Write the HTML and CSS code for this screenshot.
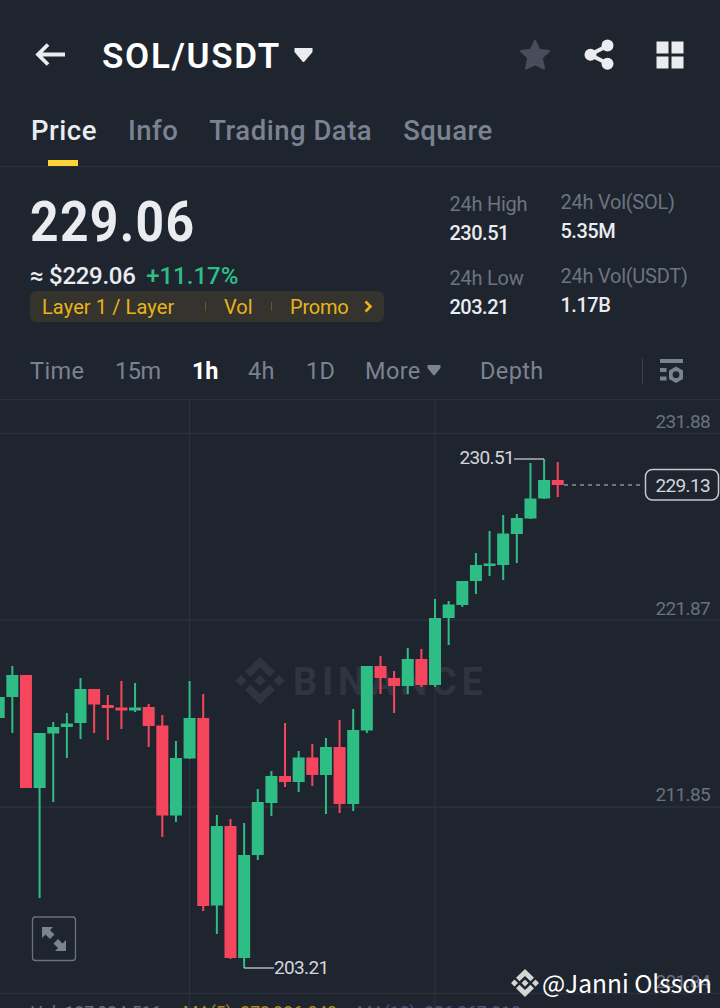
FILE: index.html
```html
<!DOCTYPE html>
<html lang="en">
<head>
    <meta charset="UTF-8" />
    <meta name="viewport" content="width=device-width, initial-scale=1.0"/>
    <title>SOL/USDT</title>
    <link rel="stylesheet" href="styles.css">
</head>
<body>
    <header class="header">
        <svg class="back" width="32" height="28" viewBox="0 0 32 28"><path d="M14 3.500L4 13.500l10 10M4.500 13.500H31"/></svg>
        <h1>SOL/USDT</h1>
        <svg class="caret" width="19" height="15" viewBox="0 0 19 15"><path d="M0.500 0h18v4L10.500 13.500q-1 1-2 0L0.500 4z"/></svg>
        <div class="actions">
            <svg width="32" height="32" viewBox="0 0 32 32"><path class="star" d="M16 2l4.200 8.800 9.800 1.200-7.200 6.700 2.200 10.800-9-4.200-9 4.200 2.200-10.800L2 12l9.800-1.200z"/></svg>
            <svg width="32" height="32" viewBox="0 0 32 32"><path class="share-line" d="M24 6.500L6 15.800l18 9"/><g class="light"><circle cx="6.500" cy="15.800" r="6"/><circle cx="23.500" cy="6.500" r="6"/><circle cx="23.500" cy="24.800" r="6"/></g></svg>
            <svg width="28" height="28" viewBox="0 0 28 28"><path class="light" d="M0.500 0.500h12v12h-12zM15.500 0.500h12v12h-12zM0.500 15.500h12v12h-12zM15.500 15.500h12v12h-12z"/></svg>
        </div>
    </header>

    <nav class="tabs">
        <span class="tab active">Price</span>
        <span class="tab">Info</span>
        <span class="tab">Trading Data</span>
        <span class="tab">Square</span>
    </nav>

    <section class="summary">
        <div class="quote">
            <div class="last-price">229.06</div>
            <div class="change">≈ $229.06 <span class="up">+11.17%</span></div>
            <div class="tags">
                <span class="tag-layer">Layer 1 / Layer</span>
                <i></i>
                <span class="tag-vol">Vol</span>
                <i></i>
                <span class="tag-promo">Promo</span>
                <svg width="9" height="13" viewBox="0 0 9 13"><path d="M1.500 1.500l5 5-5 5"/></svg>
            </div>
        </div>
        <dl class="stats stats-price">
            <dt>24h High</dt>
            <dd>230.51</dd>
            <dt>24h Low</dt>
            <dd>203.21</dd>
        </dl>
        <dl class="stats stats-vol">
            <dt>24h Vol(SOL)</dt>
            <dd>5.35M</dd>
            <dt>24h Vol(USDT)</dt>
            <dd>1.17B</dd>
        </dl>
    </section>

    <nav class="intervals">
        <span class="i-time">Time</span>
        <span class="i-15m">15m</span>
        <span class="i-1h active">1h</span>
        <span class="i-4h">4h</span>
        <span class="i-1d">1D</span>
        <span class="i-more">More</span>
        <svg class="more-caret" width="14" height="12" viewBox="0 0 14 12"><path d="M0.500 0h13v3L7.800 10q-.8.800-1.600 0L0.500 3z"/></svg>
        <span class="i-depth">Depth</span>
        <svg class="settings" width="25" height="26" viewBox="0 0 25 26">
            <path d="M1 1h23v4H1zM1 10h6.500v4H1zM1 18.500h6.500v4H1z"/>
            <path fill-rule="evenodd" d="M17 8.500l7 4v8.500l-7 4-7-4v-8.500zM17 13.300a3.400 3.400 0 1 0 0 6.800 3.400 3.400 0 0 0 0-6.800z"/>
        </svg>
    </nav>

    <main class="chart">
        <svg width="720" height="608" viewBox="0 400 720 608">
            <path class="grid" d="M0 433.500H720M0 620H720M0 807H720M0 993.500H720M189.500 400V1008M435 400V1008"/>
            <g class="brand">
                <path d="M260 657l15 14.500-5.500 5.500-9.500-9.500-9.500 9.500-5.500-5.500zM260 704.500l15-14.500-5.500-5.500-9.500 9.500-9.500-9.500-5.500 5.500zM260 675l5.500 5.500-5.500 5.500-5.500-5.500zM241 675l5.500 5.500-5.500 5.500-5.500-5.500zM279 675l5.500 5.500-5.500 5.500-5.500-5.500z"/>
                <text x="293" y="694.500">BINANCE</text>
            </g>
            <g id="candles"></g>
            <path class="marker" d="M514 459H544M244 968H274"/>
            <path class="last-line" d="M564 485H641"/>
            <g class="value">
                <text x="459.500" y="464">230.51</text>
                <text x="274" y="974">203.21</text>
            </g>
            <g class="axis">
                <text x="655.500" y="428">231.88</text>
                <text x="655.500" y="615">221.87</text>
                <text x="655.500" y="801">211.85</text>
                <text x="655.500" y="988">201.84</text>
            </g>
            <rect class="last-box" x="645.500" y="469.500" width="73" height="30.500" rx="7"/>
            <text class="last-text" x="655.500" y="492">229.13</text>
            <rect class="expand-box" x="32.500" y="917" width="43" height="43.500" rx="3"/>
            <path class="expand" d="M42 927h11l-3 3 4.500 4.500-4.500 4.500-4.500-4.500L42 938zM66 951H55l3-3-4.500-4.500 4.500-4.500 4.500 4.500L66 940z"/>
            <g class="volume">
                <text x="31" y="1019">Vol: 137,934.516</text>
                <text class="ma5" x="183" y="1019">MA(5): 272,926.040</text>
                <text class="ma10" x="357" y="1019">MA(10): 226,267.310</text>
            </g>
        </svg>
        <div class="author">
            <svg width="28" height="28" viewBox="0 0 28 28"><path d="M14 0l9 8.700-3.500 3.500L14 7l-5.500 5.200L5 8.700zM14 28l9-8.700-3.500-3.500L14 21l-5.500-5.200L5 19.300zM14 10.500l3.500 3.500-3.500 3.500-3.500-3.500zM3.500 10.500L7 14l-3.500 3.500L0 14zM24.500 10.500L28 14l-3.500 3.500L21 14z"/></svg>
            <span>@Janni Olsson</span>
        </div>
    </main>
    <script src="script.js"></script>
</body>
</html>
```
FILE: styles.css
```css
body {
    margin: 0;
    width: 720px;
    height: 1008px;
    overflow: hidden;
    background: #1f252f;
    color: #eaecef;
    font-family: Roboto, 'Liberation Sans', sans-serif;
}
svg {
    display: block;
    flex: none;
}
.header {
    display: flex;
    align-items: center;
    height: 110px;
    padding: 0 36px 0 34px;
}
.back path {
    fill: none;
    stroke: #eaecef;
    stroke-width: 3.8;
}
.header h1 {
    width: 178px;
    margin: 0;
    padding: 4px 0 0 36px;
    color: #fff;
    font-size: 35px;
    font-weight: 600;
    line-height: 40px;
    letter-spacing: 1.7px;
    white-space: nowrap;
}
.caret {
    margin-left: 14px;
    fill: #eaecef;
}
.actions {
    display: flex;
    align-items: center;
    margin-left: auto;
}
.actions svg + svg {
    margin-left: 33px;
}
.actions svg + svg + svg {
    margin-left: 40px;
}
.star {
    fill: #474d5b;
    stroke: #474d5b;
    stroke-width: 2;
    stroke-linejoin: round;
}
.light {
    fill: #eaecef;
}
.share-line {
    fill: none;
    stroke: #eaecef;
    stroke-width: 4;
}
.tabs {
    display: flex;
    gap: 31px;
    height: 56px;
    padding-left: 31px;
    border-bottom: 1px solid #2b313b;
    font-size: 27.5px;
    font-weight: 500;
    line-height: 42px;
    letter-spacing: 0.5px;
    color: #7b8292;
}
.tab {
    position: relative;
    white-space: nowrap;
}
.tab.active {
    color: #eaecef;
}
.tab.active::after {
    content: "";
    position: absolute;
    left: 17px;
    top: 50px;
    width: 30px;
    height: 6px;
    background: #fcd535;
}
.summary {
    display: flex;
    height: 174px;
    padding-left: 30px;
}
.quote {
    width: 419.5px;
    padding-top: 25px;
}
.last-price {
    font-size: 56px;
    font-weight: 700;
    line-height: 60px;
    letter-spacing: 1.5px;
    transform: scaleX(0.89);
    transform-origin: left;
}
.change {
    padding-top: 9px;
    font-size: 24px;
    font-weight: 500;
    line-height: 30px;
    letter-spacing: -0.3px;
    white-space: nowrap;
}
.up {
    margin-left: 5px;
    letter-spacing: 0;
}
.up {
    color: #2ebd85;
}
.tags {
    display: flex;
    align-items: center;
    box-sizing: border-box;
    width: 354px;
    height: 31px;
    padding-left: 12px;
    border-radius: 6px;
    background: #35332d;
    color: #e9b31c;
    font-size: 20px;
    white-space: nowrap;
}
.tags i {
    width: 1px;
    height: 9px;
    background: #6b5722;
}
.tag-layer {
    width: 163px;
    letter-spacing: 0.1px;
}
.tag-vol {
    width: 47px;
    padding-left: 18px;
}
.tag-promo {
    width: 74px;
    padding-left: 18px;
    letter-spacing: -0.2px;
}
.tags path {
    fill: none;
    stroke: #e9b31c;
    stroke-width: 2.6;
}
.stats {
    width: 111px;
    margin: 0;
    padding-top: 23px;
    font-size: 20px;
    line-height: 29px;
    letter-spacing: -0.25px;
    white-space: nowrap;
}
.stats-vol {
    padding-top: 21px;
}
.stats dt {
    color: #6c7381;
}
.stats dd {
    margin: 0 0 16px;
    color: #eaecef;
    font-weight: 500;
    letter-spacing: -0.5px;
}
.intervals {
    display: flex;
    align-items: center;
    box-sizing: border-box;
    height: 59px;
    padding: 1px 0 0 30px;
    border-bottom: 1px solid #2b313b;
    color: #7b8292;
    font-size: 23.5px;
    letter-spacing: 0.4px;
    white-space: nowrap;
}
.intervals .active {
    color: #fff;
    font-weight: 700;
    letter-spacing: -0.3px;
}
.i-time {
    width: 85px;
}
.i-15m {
    width: 77px;
    letter-spacing: -0.4px;
}
.i-1h {
    width: 56px;
}
.i-4h {
    width: 58px;
}
.i-1d {
    width: 59px;
}
.i-more {
    width: 62px;
}
.more-caret {
    fill: #7b8292;
}
.i-depth {
    width: 162px;
    margin-left: 39px;
}
.settings {
    padding-left: 16px;
    border-left: 1px solid #3a404b;
    fill: #7b8292;
}
.chart {
    position: relative;
    height: 608px;
}
.grid {
    fill: none;
    stroke: #2c323c;
    stroke-width: 1.3;
}
.brand {
    fill: #2f343e;
    font-size: 38px;
    font-weight: 700;
    letter-spacing: 4.8px;
}
.candle.rise {
    fill: #2ebd85;
}
.candle.fall {
    fill: #f6465d;
}
.marker {
    fill: none;
    stroke: #aeb3bb;
    stroke-width: 1.6;
}
.last-line {
    stroke: #8b919b;
    stroke-width: 1.6;
    stroke-dasharray: 4 4;
}
.value,
.last-text {
    fill: #d3d6dc;
    font-size: 19px;
    letter-spacing: -0.65px;
}
.axis {
    fill: #6a707d;
    font-size: 19px;
    letter-spacing: -0.65px;
}
.last-box {
    fill: #1f252f;
    stroke: #c3c7ce;
    stroke-width: 1.5;
}
.expand-box {
    fill: none;
    stroke: #6a707d;
    stroke-width: 1.3;
}
.expand {
    fill: #7b8292;
}
.volume {
    fill: #6a707d;
    font-size: 17.5px;
}
.ma5 {
    fill: #b08a20;
}
.ma10 {
    fill: #585080;
}
.author {
    position: absolute;
    right: 8px;
    bottom: 6px;
    display: flex;
    align-items: center;
    gap: 3px;
    color: #fff;
    font-family: 'Noto Sans CJK SC', 'Noto Sans', sans-serif;
    font-size: 24.5px;
    line-height: 38px;
    white-space: nowrap;
}
.author svg {
    fill: #d5d5d6;
}
```
FILE: script.js
```js
// body top, body bottom, wick top, wick bottom, direction
const candles = [
    [697, 718, 697, 718, 1],
    [675, 697, 666, 733, 1],
    [675, 788, 675, 788, 0],
    [733, 788, 733, 898, 1],
    [727, 733.5, 722, 802, 1],
    [723.5, 727, 713, 758, 1],
    [689, 723, 678, 739, 1],
    [689, 704.5, 689, 733, 0],
    [705, 708, 695, 740, 0],
    [707.5, 710.5, 681, 729, 0],
    [707.5, 710.5, 683, 712, 1],
    [707, 726, 704, 747, 0],
    [725.5, 815.5, 715, 837, 0],
    [758, 815.5, 741, 822, 1],
    [718, 758.5, 681, 759, 1],
    [718, 906, 694, 911, 0],
    [826, 905.5, 815, 934, 1],
    [826, 958, 819, 959, 0],
    [855, 958, 823, 968, 1],
    [802, 855, 789, 860, 1],
    [776, 803, 771, 816, 1],
    [776, 782, 723, 787, 0],
    [757.5, 782, 751, 792, 1],
    [757.5, 775, 744, 786, 0],
    [747, 775, 738, 814, 1],
    [747, 804, 720, 813, 0],
    [730, 804, 709, 811, 1],
    [666, 730.5, 666, 733, 1],
    [666, 678, 656, 694, 0],
    [678, 686, 671, 713, 0],
    [659, 686, 648, 694, 1],
    [659, 685, 649, 687, 0],
    [618, 685, 599, 687, 1],
    [604.5, 618, 601, 645, 1],
    [581, 605, 581, 607, 1],
    [565, 581, 553, 594, 1],
    [563.5, 566, 531, 576, 1],
    [533.5, 565, 515, 580, 1],
    [518, 534, 514, 563, 1],
    [498.5, 518.5, 463, 519, 1],
    [480, 498.5, 459, 499, 1],
    [480, 485, 462, 497, 0]
];

const group = document.getElementById('candles');
candles.forEach(([top, bottom, high, low, rise], i) => {
    const x = -1.3 + i * 13.635;
    const path = document.createElementNS('http://www.w3.org/2000/svg', 'path');
    path.setAttribute('class', rise ? 'candle rise' : 'candle fall');
    path.setAttribute('d', `M${x - 6} ${top}h12V${bottom}h-12zM${x - 1} ${high}h2V${low}h-2z`);
    group.appendChild(path);
});
```
